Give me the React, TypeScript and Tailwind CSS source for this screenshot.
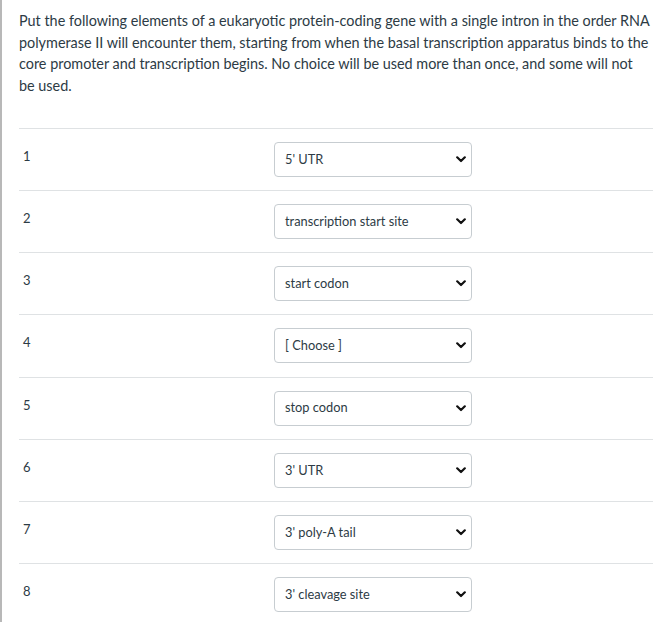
import React from 'react';

const answers = [
  '5\' UTR',
  'transcription start site',
  'start codon',
  '[ Choose ]',
  'stop codon',
  '3\' UTR',
  '3\' poly-A tail',
  '3\' cleavage site',
];

const Chevron = () => (
  <svg width="10" height="7" viewBox="0 0 10 7" className="shrink-0">
    <path d="M1.2 1.3 L5 5 L8.8 1.3" fill="none" stroke="#111" strokeWidth="2.2" strokeLinecap="round" strokeLinejoin="round" />
  </svg>
);

export default function App() {
  return (
    <div className="min-h-[622px] bg-white border-l-2 border-[#b8b8b8] pl-[17px] pr-[8px] pt-[10px] text-[#2d3b45]" style={{ fontFamily: 'Lato, "Open Sans", sans-serif' }}>
      <p className="text-[14.4px] leading-[21.7px] text-[#2d3b45] pr-[2.5px]">
        Put the following elements of a eukaryotic protein-coding gene with a single intron in the order RNA polymerase II will encounter them, starting from when the basal transcription apparatus binds to the core promoter and transcription begins. No choice will be used more than once, and some will not be used.
      </p>
      <div className="mt-[31px]">
        {answers.map((a, i) => (
          <div key={i} className="flex h-[62.2px] border-t border-[#dfe2e4] pt-[13px]">
            <div className="w-[255px] pl-[4px] pt-[5px] text-[13px] leading-[18px]">{i + 1}</div>
            <div className="flex h-[35px] w-[198px] items-center justify-between rounded-[4px] border border-[#c7cdd1] pl-[10px] pr-[5px] text-[12.8px]">
              <span>{a}</span>
              <Chevron />
            </div>
          </div>
        ))}
      </div>
    </div>
  );
}
